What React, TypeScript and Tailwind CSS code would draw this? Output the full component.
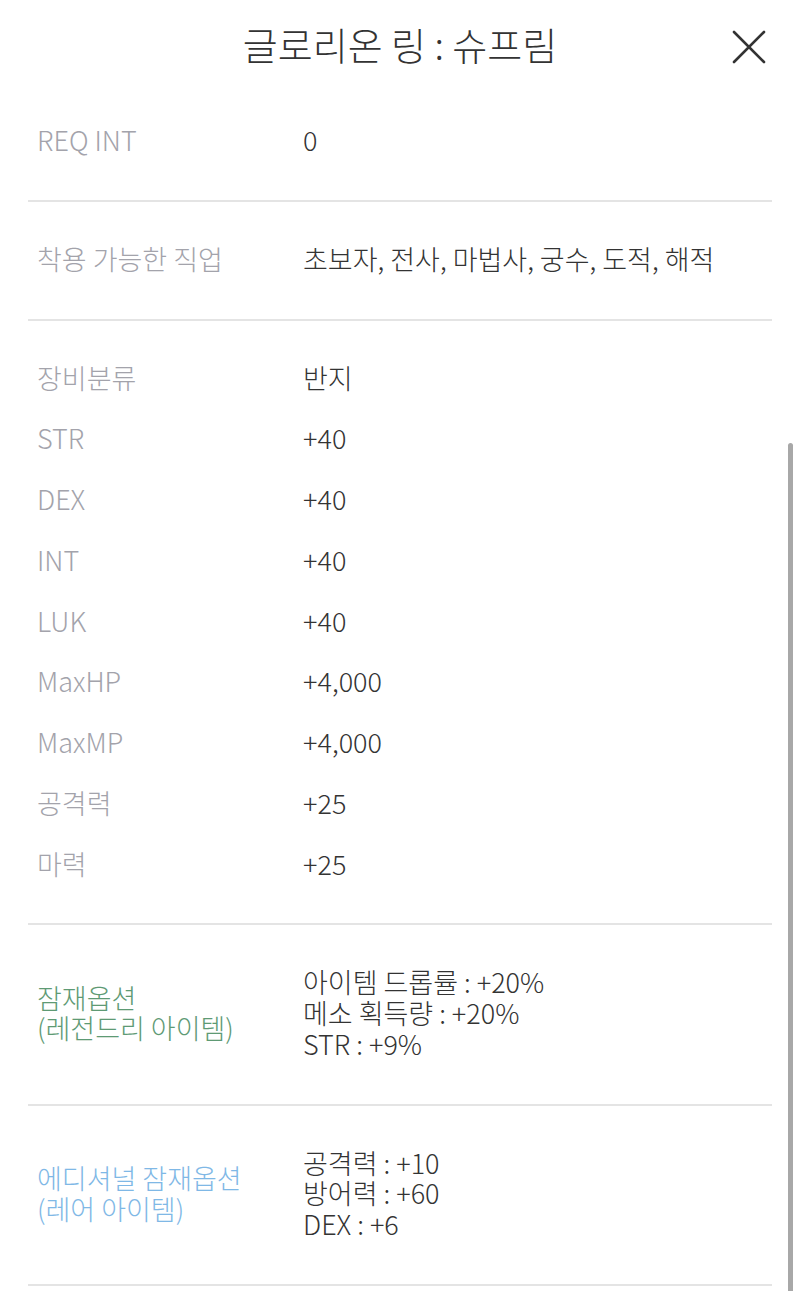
import React from "react"

type Row = { label: string; value: string[]; tone?: "gray" | "green" | "blue"; labelLines?: string[] }

const groups: Row[][] = [
  [{ label: "REQ INT", value: ["0"] }],
  [{ label: "착용 가능한 직업", value: ["초보자, 전사, 마법사, 궁수, 도적, 해적"] }],
  [
    { label: "장비분류", value: ["반지"] },
    { label: "STR", value: ["+40"] },
    { label: "DEX", value: ["+40"] },
    { label: "INT", value: ["+40"] },
    { label: "LUK", value: ["+40"] },
    { label: "MaxHP", value: ["+4,000"] },
    { label: "MaxMP", value: ["+4,000"] },
    { label: "공격력", value: ["+25"] },
    { label: "마력", value: ["+25"] },
  ],
  [
    {
      label: "",
      labelLines: ["잠재옵션", "(레전드리 아이템)"],
      tone: "green",
      value: ["아이템 드롭률 : +20%", "메소 획득량 : +20%", "STR : +9%"],
    },
  ],
  [
    {
      label: "",
      labelLines: ["에디셔널 잠재옵션", "(레어 아이템)"],
      tone: "blue",
      value: ["공격력 : +10", "방어력 : +60", "DEX : +6"],
    },
  ],
]

const toneClass = {
  gray: "text-[#a3a3ab]",
  green: "text-[#5e9a74]",
  blue: "text-[#7fb8e6]",
}

function CloseIcon() {
  return (
    <svg width="34" height="34" viewBox="0 0 34 34" fill="none">
      <path d="M2 2L32 32M32 2L2 32" stroke="#333" strokeWidth="2.6" strokeLinecap="round" />
    </svg>
  )
}

export default function App() {
  return (
    <div className="relative w-[800px] h-[1291px] overflow-hidden bg-white font-['Noto_Sans_CJK_KR',sans-serif] font-light text-[#333]">
      {/* header */}
      <div className="relative h-[83px] pt-[21px] flex justify-center">
        <h1 className="text-[38px] leading-[46px] text-[#333] font-light">글로리온 링 : 슈프림</h1>
        <button className="absolute right-[34px] top-[30px]">
          <CloseIcon />
        </button>
      </div>

      <div className="mx-[28px]">
        {groups.map((rows, gi) => (
          <div key={gi} className="py-[28px] border-b-2 border-[#e4e4e4]">
            {rows.map((row, ri) => (
              <div key={ri} className="flex items-center pt-[14px] pb-[16px] text-[27px] leading-[30.75px]">
                <div className={`w-[275px] pl-[9px] ${toneClass[row.tone ?? "gray"]}`}>
                  {row.labelLines ? row.labelLines.map((l) => <div key={l}>{l}</div>) : row.label}
                </div>
                <div className="flex-1">
                  {row.value.map((v) => (
                    <div key={v}>{v}</div>
                  ))}
                </div>
              </div>
            ))}
          </div>
        ))}
      </div>

      {/* overlay scrollbar */}
      <div className="absolute right-[7px] top-[443px] w-[5px] h-[860px] rounded-full bg-[#a8a8a8]" />
    </div>
  )
}
